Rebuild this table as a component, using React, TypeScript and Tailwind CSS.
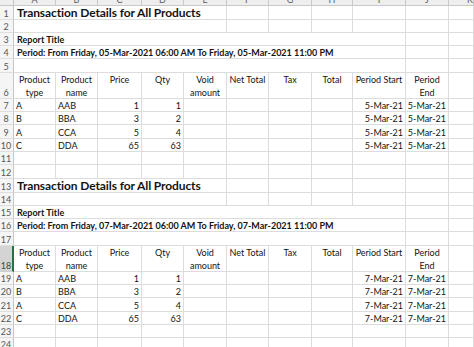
import React from 'react';

type Kind = 'title' | 'bold' | 'hdr' | 'l' | 'r';
type Cell = { span?: 1 | 5 | 9; text?: string; kind?: Kind };

const empties = (n: number): Cell[] => Array.from({ length: n }, () => ({}));

const LETTERS = ['A', 'B', 'C', 'D', 'E', 'F', 'G', 'H', 'I', 'J', 'K'];

function block(dd: string, d: string): Cell[][] {
  const hdr: Cell[] = [
    'Product\ntype',
    'Product\nname',
    'Price',
    'Qty',
    'Void\namount',
    'Net Total',
    'Tax',
    'Total',
    'Period Start',
    'Period\nEnd',
  ].map((t) => ({ text: t, kind: 'hdr' as Kind }));
  const data: [string, string, string, string][] = [
    ['A', 'AAB', '1', '1'],
    ['B', 'BBA', '3', '2'],
    ['A', 'CCA', '5', '4'],
    ['C', 'DDA', '65', '63'],
  ];
  const dataRows: Cell[][] = data.map(([a, b, c, q]) => [
    { text: a, kind: 'l' },
    { text: b, kind: 'l' },
    { text: c, kind: 'r' },
    { text: q, kind: 'r' },
    {},
    {},
    {},
    {},
    { text: `${d}-Mar-21`, kind: 'r' },
    { text: `${d}-Mar-21`, kind: 'r' },
    {},
  ]);
  return [
    [{ span: 5, text: 'Transaction Details for All Products', kind: 'title' }, ...empties(6)],
    [{ span: 5 }, ...empties(6)],
    [{ span: 9, text: 'Report Title', kind: 'bold' }, ...empties(2)],
    [
      {
        span: 9,
        text: `Period: From Friday, ${dd}-Mar-2021 06:00 AM To Friday, ${dd}-Mar-2021 11:00 PM`,
        kind: 'bold',
      },
      ...empties(2),
    ],
    [{ span: 9 }, ...empties(2)],
    [...hdr, {}],
    ...dataRows,
    empties(11),
    empties(11),
  ];
}

const ROWS: Cell[][] = [...block('05', '5'), ...block('07', '7')];

const SPAN: Record<number, string> = {
  1: 'col-span-1',
  5: 'col-span-5',
  9: 'col-span-9',
};

const KIND: Record<Kind, string> = {
  title: 'text-[12px] font-bold leading-[13px] items-end pl-[3px] tracking-[-0.1px]',
  bold: 'text-[9px] font-bold leading-[11px] items-end pl-[3px]',
  hdr: 'text-[9px] leading-[13px] items-start justify-center text-center',
  l: 'text-[9px] leading-[11px] items-end pl-[2px]',
  r: 'text-[9px] leading-[11px] items-end justify-end pr-[2px]',
};

export default function App() {
  return (
    <div className="w-[474px] h-[347px] overflow-hidden bg-white [font-family:Lato,'Liberation_Sans',sans-serif] text-[#141414]">
      <div className="grid grid-cols-[14px_42px_42px_44px_42px_43px_42px_43px_41px_53px_43px_25px] grid-rows-[6px_14px_13px_13px_13px_14px_26px_13px_13px_14px_13px_13px_14px_14px_13px_13px_13px_14px_26px_13px_13px_14px_13px_13px_13px]">
        {/* corner */}
        <div className="bg-[#eeeeee] border-r border-b border-[#c6c6c6]" />
        {LETTERS.map((l) => (
          <div
            key={l}
            className="bg-[#eeeeee] border-r border-b border-[#c9c9c9] overflow-hidden flex items-end justify-center"
          >
            {l === 'K' ? (
              <div className="w-[43px] shrink-0 ml-[-0px] text-center text-[9px] leading-[11px] text-[#5e5e5e] translate-x-[9px]">
                K
              </div>
            ) : (
              <span className="text-[9px] leading-[11px] text-[#5e5e5e]">{l}</span>
            )}
          </div>
        ))}
        {ROWS.map((row, ri) => {
          const n = ri + 1;
          const sel = n === 18;
          return (
            <React.Fragment key={ri}>
              <div
                className={
                  sel
                    ? 'bg-[#d4d4d4] border-r-2 border-r-[#217346] border-b border-b-[#cfcfcf] flex items-end overflow-visible'
                    : 'bg-[#f5f5f5] border-r border-r-[#c6c6c6] border-b border-b-[#dedede] flex items-end overflow-visible'
                }
              >
                <div
                  className={
                    sel
                      ? 'w-[12px] shrink-0 text-center whitespace-nowrap text-[9px] leading-[11px] text-[#2f4f3d]'
                      : 'w-[12px] shrink-0 text-center whitespace-nowrap text-[9px] leading-[11px] text-[#555555]'
                  }
                >
                  {n}
                </div>
              </div>
              {row.map((c, ci) => (
                <div
                  key={ci}
                  className={`${SPAN[c.span ?? 1]} ${c.kind ? KIND[c.kind] : ''} flex min-w-0 border-r border-b border-[#dcdcdc] ${
                    c.kind === 'hdr' ? 'whitespace-pre-line' : 'whitespace-nowrap'
                  }`}
                >
                  {c.text ? <span>{c.text}</span> : null}
                </div>
              ))}
            </React.Fragment>
          );
        })}
      </div>
    </div>
  );
}
